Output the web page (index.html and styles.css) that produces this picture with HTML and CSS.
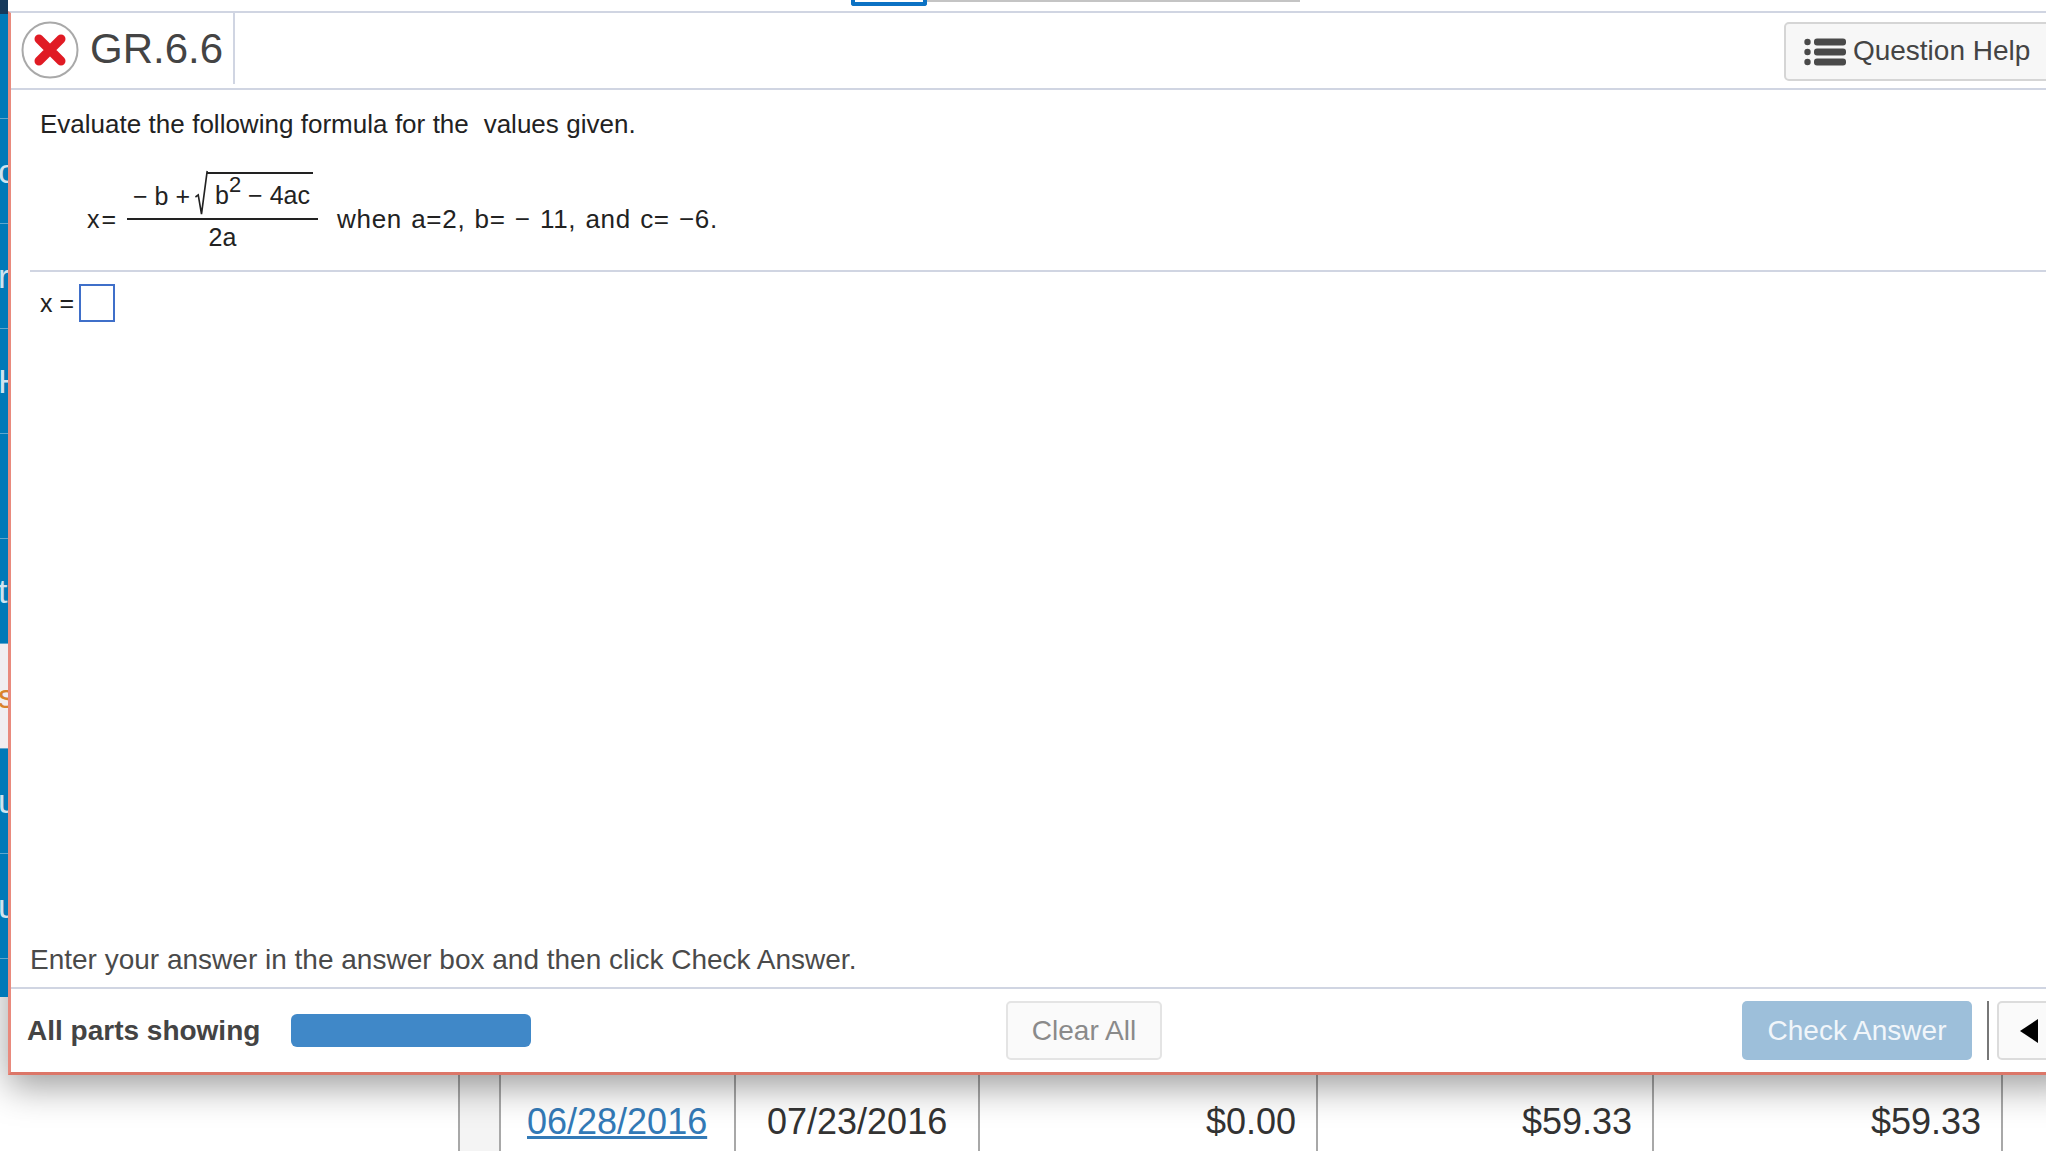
FILE: index.html
```html
<!DOCTYPE html>
<html lang="en">
<head>
<meta charset="utf-8">
<title>GR.6.6</title>
<link rel="stylesheet" href="styles.css">
</head>
<body>
<div class="page">
  <aside class="strip">
    <div class="strip-cap"></div>
    <div class="strip-row"></div>
    <div class="strip-row"><span>c</span></div>
    <div class="strip-row"><span>r</span></div>
    <div class="strip-row"><span>H</span></div>
    <div class="strip-row"></div>
    <div class="strip-row"><span>t</span></div>
    <div class="strip-row strip-row-active"><span>s</span></div>
    <div class="strip-row"><span>u</span></div>
    <div class="strip-row"><span>u</span></div>
    <div class="strip-row strip-row-last"></div>
  </aside>
  <div class="tabs">
    <div class="tab-active"></div>
    <div class="tab-rest"></div>
  </div>
  <main class="dialog">
    <header class="dialog-head">
      <svg class="close-icon" viewBox="0 0 58 58" aria-hidden="true">
        <circle cx="29" cy="29" r="27.5" fill="#fff" stroke="#a9a9a9" stroke-width="2"/>
        <path d="M18 18 L40 40 M40 18 L18 40" fill="none" stroke="#e01b24" stroke-width="9" stroke-linecap="round"/>
      </svg>
      <h1 class="title">GR.6.6</h1>
      <div class="help-btn">
        <svg class="help-icon" viewBox="0 0 42 28" aria-hidden="true">
          <g fill="#4a4a4a">
            <circle cx="3.5" cy="4" r="3.2"/><circle cx="3.5" cy="14" r="3.2"/><circle cx="3.5" cy="24" r="3.2"/>
            <rect x="10" y="0.5" width="32" height="7" rx="3"/><rect x="10" y="10.5" width="32" height="7" rx="3"/><rect x="10" y="20.5" width="32" height="7" rx="3"/>
          </g>
        </svg>
        <span>Question Help</span>
      </div>
    </header>
    <section class="question">
      <p class="prompt">Evaluate the following formula for the&nbsp; values given.</p>
      <div class="formula">
        <span class="lhs">x=</span>
        <div class="fraction">
          <div class="numerator">
            <span class="num-lead">− b +</span>
            <svg class="radical" viewBox="0 0 16 46" preserveAspectRatio="none" aria-hidden="true"><path d="M0.5 27 L4 25 L8 44 L15 1" fill="none" stroke="#222" stroke-width="2"/></svg>
            <span class="radicand">b<sup>2</sup> − 4ac</span>
          </div>
          <div class="denominator">2a</div>
        </div>
        <span class="when">when a=2, b= − 11, and c= −6.</span>
      </div>
      <div class="answer">
        <span>x =</span>
        <span class="answer-box"></span>
      </div>
    </section>
    <p class="hint">Enter your answer in the answer box and then click Check Answer.</p>
    <footer class="dialog-foot">
      <strong class="parts">All parts showing</strong>
      <div class="progress"></div>
      <div class="btn btn-clear">Clear All</div>
      <div class="btn btn-check">Check Answer</div>
      <div class="foot-sep"></div>
      <div class="btn btn-nav"><span class="arrow-left"></span></div>
    </footer>
  </main>
  <div class="ledger">
    <div class="cell cell-side"></div>
    <div class="cell cell-date"><a class="link" href="#">06/28/2016</a></div>
    <div class="cell cell-due">07/23/2016</div>
    <div class="cell cell-amount cell-a">$0.00</div>
    <div class="cell cell-amount cell-b">$59.33</div>
    <div class="cell cell-amount cell-c">$59.33</div>
    <div class="cell cell-end"></div>
  </div>
</div>
</body>
</html>
```
FILE: styles.css
```css
* { box-sizing: border-box; }
html, body { margin: 0; padding: 0; background: #fff; }
body { font-family: "Liberation Sans", Arial, sans-serif; color: #222; }

.page {
  width: 2046px;
  height: 1151px;
  overflow: hidden;
  display: grid;
  grid-template-columns: 8px 2070px;
  grid-template-rows: 11px 1064px 76px;
}

/* left strip of the page behind the dialog */
.strip {
  grid-column: 1;
  grid-row: 1 / 3;
  height: 997px;
  position: relative;
  z-index: 3;
  display: flex;
  flex-direction: column;
  background: #0079b8;
  overflow: hidden;
}
.strip-cap { height: 14px; background: #163a5c; flex: none; }
.strip-row {
  height: 105px;
  flex: none;
  border-bottom: 1px solid #5fa7cf;
  color: #cfe4f0;
  font-size: 34px;
  line-height: 104px;
  white-space: nowrap;
}
.strip-row:first-of-type { height: 90px; }
.strip-row span { margin-left: -2px; display: inline-block; }
.strip-row-active { background: #f1eef1; color: #d9822b; }
.strip-row-last { height: 39px; border-bottom: 0; }

/* tab fragments above the dialog */
.tabs {
  grid-column: 2;
  grid-row: 1;
  position: relative;
  z-index: 3;
  background: #fff;
  display: flex;
  align-items: flex-start;
  padding-left: 843px;
}
.tab-active {
  width: 76px;
  height: 6px;
  border: 4px solid #0c72c4;
  border-top: 0;
  border-radius: 0 0 3px 3px;
}
.tab-rest {
  width: 373px;
  height: 2px;
  background: #c4c4c4;
}

/* dialog */
.dialog {
  grid-column: 2;
  grid-row: 2;
  position: relative;
  z-index: 2;
  display: flex;
  flex-direction: column;
  background: #fff;
  border-top: 2px solid #d0d5e2;
  border-left: 3px solid #e98a7d;
  border-bottom: 3px solid #dc7668;
  box-shadow: 0 12px 34px rgba(0, 0, 0, .38);
}
.dialog-head {
  flex: none;
  height: 77px;
  display: flex;
  align-items: flex-start;
  border-bottom: 2px solid #d0d5e2;
}
.close-icon { width: 58px; height: 58px; margin: 8px 0 0 10px; flex: none; }
.title {
  margin: 0;
  width: 159px;
  height: 71px;
  padding: 0 0 0 11px;
  border-right: 2px solid #d0d5e2;
  font-size: 42px;
  font-weight: 400;
  line-height: 72px;
  color: #444;
}
.help-btn {
  margin: 9px 0 0 1549px;
  width: 300px;
  height: 59px;
  display: flex;
  align-items: center;
  padding: 0 0 2px 18px;
  gap: 7px;
  background: #f7f7f7;
  border: 2px solid #d5d5d5;
  border-radius: 5px;
  font-size: 28px;
  color: #444;
}
.help-icon { width: 42px; height: 28px; flex: none; transform: translateY(1px); }

.question {
  flex: 1;
  padding-left: 19px;
  font-size: 26px;
  color: #222;
}
.prompt {
  margin: 19px 0 0 10px;
  line-height: 30px;
  font-size: 26px;
  word-spacing: .2px;
}
.formula {
  margin-top: 30px;
  padding-left: 57px;
  display: flex;
  align-items: center;
  height: 101px;
  font-size: 25px;
}
.lhs { width: 40px; flex: none; white-space: nowrap; letter-spacing: 2px; }
.fraction { width: 191px; flex: none; display: flex; flex-direction: column; align-items: center; }
.numerator {
  width: 100%;
  height: 51px;
  display: flex;
  align-items: flex-end;
  padding: 0 0 4px 6px;
  border-bottom: 2px solid #222;
}
.num-lead { padding-bottom: 3px; white-space: nowrap; width: 62px; flex: none; }
.radical { width: 13px; height: 46px; flex: none; transform: translateY(2px); }
.radicand { margin-left: -1px; border-top: 2px solid #222; padding: 2px 3px 0 8px; line-height: 38px; white-space: nowrap; }
.radicand sup { font-size: 22px; line-height: 0; vertical-align: 12px; }
.denominator { height: 50px; padding-top: 2px; line-height: 30px; }
.when { margin-left: 19px; white-space: nowrap; font-size: 26px; letter-spacing: .7px; word-spacing: 1.3px; }

.answer {
  border-top: 2px solid #d0d5e2;
  padding: 12px 0 0 10px;
  display: flex;
  align-items: center;
  gap: 5px;
  font-size: 25px;
}
.answer-box { width: 36px; height: 38px; border: 2px solid #3f6fc9; }

.hint {
  margin: 0 0 11px 19px;
  font-size: 28px;
  line-height: 32px;
  color: #4a4a4a;
  flex: none;
}
.dialog-foot {
  flex: none;
  height: 85px;
  border-top: 2px solid #d0d5e2;
  display: flex;
  align-items: center;
  padding-left: 16px;
  color: #444;
}
.parts { width: 264px; flex: none; font-size: 28px; font-weight: 700; white-space: nowrap; }
.progress { width: 240px; height: 33px; flex: none; background: #4088c8; border-radius: 6px; }
.btn {
  flex: none;
  height: 59px;
  display: flex;
  align-items: center;
  justify-content: center;
  font-size: 28px;
  border-radius: 5px;
}
.btn-clear { margin-left: 475px; width: 156px; background: #fafafa; border: 2px solid #e4e4e4; color: #8a8a8a; }
.btn-check { margin-left: 580px; width: 230px; background: #9dbfda; color: #f1f6fa; }
.foot-sep { margin-left: 15px; width: 2px; height: 59px; flex: none; background: #777; }
.btn-nav { margin-left: 8px; width: 90px; background: #fafafa; border: 2px solid #dcdcdc; justify-content: flex-start; padding-left: 21px; }
.arrow-left {
  width: 0;
  height: 0;
  border-top: 12px solid transparent;
  border-bottom: 12px solid transparent;
  border-right: 18px solid #000;
}

/* table row that shows below the dialog */
.ledger {
  grid-column: 1 / 3;
  grid-row: 3;
  margin-left: 458px;
  display: flex;
  height: 76px;
  font-size: 36px;
  color: #333;
  line-height: 40px;
}
.cell { flex: none; border-left: 2px solid #a8a8a8; padding-top: 27px; white-space: nowrap; }
.cell-side { width: 41px; background: #f4f4f4; }
.cell-date { width: 235px; padding-left: 26px; }
.cell-due { width: 244px; padding-left: 31px; }
.cell-amount { text-align: right; padding-right: 20px; }
.cell-a { width: 338px; }
.cell-b { width: 336px; }
.cell-c { width: 349px; }
.cell-end { width: 60px; }
.link { color: #337ab7; text-decoration: underline; }
```
